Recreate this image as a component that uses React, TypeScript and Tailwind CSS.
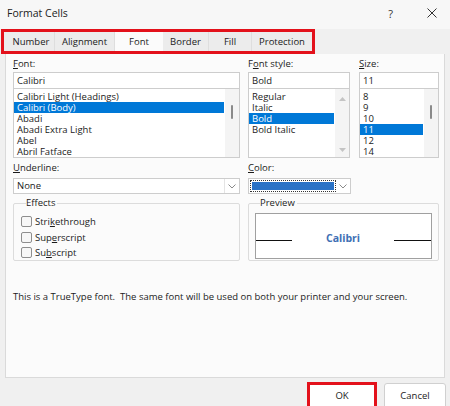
import * as React from 'react';

const fonts = ['Calibri Light (Headings)', 'Calibri (Body)', 'Abadi', 'Abadi Extra Light', 'Abel', 'Abril Fatface'];
const styles = ['Regular', 'Italic', 'Bold', 'Bold Italic'];
const sizes = ['8', '9', '10', '11', '12', '14'];

function Chevron() {
  return (
    <svg width="8" height="5" viewBox="0 0 8 5" className="block">
      <polyline points="0.5,0.5 4,4 7.5,0.5" fill="none" stroke="#8a8a8a" strokeWidth="1" />
    </svg>
  );
}

function Tab({label, width, active}: {label: string; width: string; active?: boolean}) {
  return (
    <div className={`${width} h-full flex items-center justify-center ${active ? 'bg-[#fbfbfb]' : 'bg-[#ececec] border-r border-[#dedede]'}`}>
      {label}
    </div>
  );
}

function ListBox({items, selected, width, scroll}: {items: string[]; selected: number; width: string; scroll: 'thumb' | 'arrows'}) {
  return (
    <div className={`${width} h-[69px] flex bg-white border border-t-0 border-[#cdcdcd]`}>
      <div className="flex-1 flex flex-col pt-[2px]">
        {items.map((item, i) => (
          <div key={item} className={`h-[11px] leading-[11px] flex items-center pl-[3px] ${i === selected ? 'bg-[#0078d7] text-white' : ''}`}>
            {item}
          </div>
        ))}
      </div>
      <div className="w-[14px] ml-[1px] bg-[#f4f4f4] flex flex-col items-center">
        {scroll === 'thumb' ? (
          <div className="mt-[16px] w-[2px] h-[14px] rounded-full bg-[#8a8a8a]" />
        ) : (
          <>
            <svg width="7" height="4" viewBox="0 0 7 4" className="mt-[8px]"><polygon points="0,4 3.5,0 7,4" fill="#c4c4c4" /></svg>
            <div className="flex-1" />
            <svg width="7" height="4" viewBox="0 0 7 4" className="mb-[5px]"><polygon points="0,0 3.5,4 7,0" fill="#c4c4c4" /></svg>
          </>
        )}
      </div>
    </div>
  );
}

function Field({label, value}: {label: React.ReactNode; value: string}) {
  return (
    <>
      <div className="h-[12px] flex items-center">{label}</div>
      <div className="mt-[2px] h-[17px] bg-white border border-[#cdcdcd] flex items-center pl-[3px]">{value}</div>
    </>
  );
}

function Check({children}: {children: React.ReactNode}) {
  return (
    <div className="h-[15.5px] flex items-center gap-[3px]">
      <div className="w-[11px] h-[11px] rounded-[2px] border border-[#8e8e8e] bg-[#f7f7f7]" />
      <span>{children}</span>
    </div>
  );
}

export default function App() {
  return (
    <div className="w-[450px] h-[406px] overflow-hidden bg-[#f0f0f0] flex flex-col font-['Open_Sans','Noto_Sans',sans-serif] text-[9.5px] leading-none text-[#1b1b1b]">
      {/* title bar */}
      <div className="h-[29px] shrink-0 bg-[#f7f7f7] flex items-center pl-[7px] pr-[13px] pb-[3px]">
        <span className="text-[10.5px]">Format Cells</span>
        <div className="flex-1" />
        <span className="text-[11px] text-[#333]">?</span>
        <svg width="10" height="10" viewBox="0 0 10 10" className="ml-[34px]">
          <path d="M0.5 0.5 L9.5 9.5 M9.5 0.5 L0.5 9.5" stroke="#333" strokeWidth="1" />
        </svg>
      </div>

      {/* tabs */}
      <div className="ml-[1px] w-[314px] h-[25px] shrink-0 border-[3px] border-[#e3111b] flex">
        <div className="w-[51px] h-full flex items-center justify-center pl-[4px] bg-[#ececec] border-r border-[#dedede]">Number</div>
        <Tab label="Alignment" width="w-[60px]" />
        <Tab label="Font" width="w-[48px]" active />
        <Tab label="Border" width="w-[46px]" />
        <Tab label="Fill" width="w-[43px]" />
        <div className="w-[60px] h-full flex items-center justify-center bg-[#ececec]">Protection</div>
      </div>

      {/* panel */}
      <div className="mx-[5px] h-[324px] shrink-0 bg-[#fbfbfb] border border-t-0 border-[#dadada] pl-[7px] pt-[4px] flex flex-col">
        <div className="flex gap-[8px]">
          <div className="w-[227px] flex flex-col">
            <Field label={<span><u>F</u>ont:</span>} value="Calibri" />
            <ListBox items={fonts} selected={1} width="w-[227px]" scroll="thumb" />
          </div>
          <div className="w-[102px] flex flex-col">
            <Field label={<span>F<u>o</u>nt style:</span>} value="Bold" />
            <ListBox items={styles} selected={2} width="w-[102px]" scroll="arrows" />
          </div>
          <div className="ml-[1px] w-[80px] flex flex-col">
            <Field label={<span><u>S</u>ize:</span>} value="11" />
            <ListBox items={sizes} selected={3} width="w-[80px]" scroll="thumb" />
          </div>
        </div>

        <div className="flex gap-[8px] mt-[4px]">
          <div className="w-[227px] flex flex-col">
            <div className="h-[12px] flex items-center"><span><u>U</u>nderline:</span></div>
            <div className="mt-[4px] h-[16px] bg-white border border-[#cdcdcd] flex items-center pl-[3px]">
              <span className="flex-1">None</span>
              <div className="w-[15px] h-full border-l border-[#e4e4e4] flex items-center justify-center">
                <Chevron />
              </div>
            </div>
          </div>
          <div className="w-[103px] flex flex-col">
            <div className="h-[12px] flex items-center"><span><u>C</u>olor:</span></div>
            <div className="mt-[4px] h-[16px] bg-white border border-[#cdcdcd] flex items-center">
              <div className="ml-[1px] w-[86px] h-[12px] border border-dotted border-[#333] p-[1px]">
                <div className="w-full h-full bg-[#2a72c6]" />
              </div>
              <div className="flex-1 h-full flex items-center justify-center">
                <Chevron />
              </div>
            </div>
          </div>
        </div>

        <div className="flex gap-[8px] mt-[3px]">
          <fieldset className="w-[227px] h-[64px] border border-[#dcdcdc] rounded-[2px] pl-[7px]">
            <legend className="ml-[5px] pr-[2px] leading-[12px]">Effects</legend>
            <div className="mt-[5px] flex flex-col">
              <Check>Stri<u>k</u>ethrough</Check>
              <Check>Sup<u>e</u>rscript</Check>
              <Check>Su<u>b</u>script</Check>
            </div>
          </fieldset>
          <fieldset className="w-[191px] h-[64px] border border-[#dcdcdc] rounded-[2px] px-[6px]">
            <legend className="ml-[5px] pr-[2px] leading-[12px]">Preview</legend>
            <div className="mt-[4px] h-[46px] bg-white border border-[#a0a0a0] flex items-end pb-[17px]">
              <div className="w-[36px] h-px bg-[#111]" />
              <div className="flex-1 flex justify-center">
                <span className="font-bold text-[10.5px] text-[#3d6fb4] -mb-[2px]">Calibri</span>
              </div>
              <div className="w-[37px] h-px bg-[#111]" />
            </div>
          </fieldset>
        </div>

        <div className="mt-[31px] whitespace-pre">This is a TrueType font.  The same font will be used on both your printer and your screen.</div>
      </div>

      {/* buttons */}
      <div className="flex justify-end items-start gap-[7px] pr-[4px] pt-[4px]">
        <div className="w-[70px] h-[28px] shrink-0 border-[3px] border-[#e3111b] bg-white flex items-center justify-center pb-[1px]">OK</div>
        <div className="mt-[1px] w-[62px] h-[27px] shrink-0 rounded-[3px] border border-[#d0d0d0] bg-white flex items-center justify-center pb-[1px]">Cancel</div>
      </div>
    </div>
  );
}
